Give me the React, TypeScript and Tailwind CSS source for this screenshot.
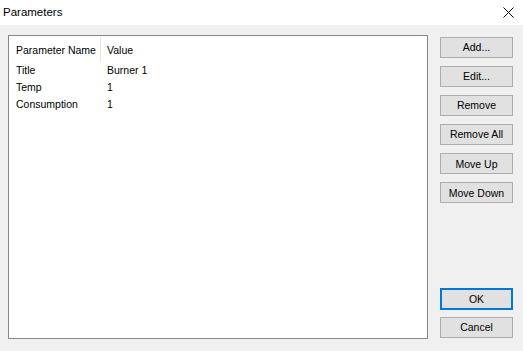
import React from "react";

const btn =
  "w-[73px] h-[21px] bg-[#e1e1e1] border border-[#adadad] flex items-center justify-center text-[10.5px] text-black leading-none";

export default function App() {
  const rows = [
    ["Title", "Burner 1"],
    ["Temp", "1"],
    ["Consumption", "1"],
  ];
  return (
    <div
      className="w-[523px] h-[351px] bg-[#f0f0f0] flex flex-col overflow-hidden"
      style={{ fontFamily: '"Liberation Sans", Arial, sans-serif' }}
    >
      <div className="h-[25px] bg-white flex items-center justify-between pl-[3px] pr-[9px]">
        <span className="text-[11.5px] text-black">Parameters</span>
        <svg width="11" height="11" viewBox="0 0 11 11">
          <path d="M0.5 0.5 L10.5 10.5 M10.5 0.5 L0.5 10.5" stroke="#000" strokeWidth="1" fill="none" />
        </svg>
      </div>
      <div className="flex pl-[8px] pt-[10px] gap-[12px]">
        <div className="w-[420px] h-[304px] bg-white border border-[#828790] flex flex-col">
          <div className="h-[27px] flex items-stretch text-[10.5px] text-black">
            <div className="w-[92px] pl-[7px] pt-[3px] flex items-center border-r border-[#e5e5e5] my-[1px]">
              Parameter Name
            </div>
            <div className="pl-[6px] pt-[3px] flex items-center">Value</div>
          </div>
          {rows.map(([a, b]) => (
            <div key={a} className="h-[16.7px] flex items-center text-[10.5px] text-black">
              <div className="w-[98px] pl-[7px]">{a}</div>
              <div>{b}</div>
            </div>
          ))}
        </div>
        <div className="h-[304px] flex flex-col justify-between pt-[1.5px]">
          <div className="flex flex-col gap-[8.2px]">
            <div className={btn}>Add...</div>
            <div className={btn}>Edit...</div>
            <div className={btn}>Remove</div>
            <div className={btn}>Remove All</div>
            <div className={btn}>Move Up</div>
            <div className={btn}>Move Down</div>
          </div>
          <div className="flex flex-col gap-[7px] pb-[1px]">
            <div className="w-[73px] h-[22px] bg-[#e1e1e1] border-2 border-[#0078d7] flex items-center justify-center text-[10.5px] text-black leading-none">
              OK
            </div>
            <div className={btn}>Cancel</div>
          </div>
        </div>
      </div>
    </div>
  );
}
